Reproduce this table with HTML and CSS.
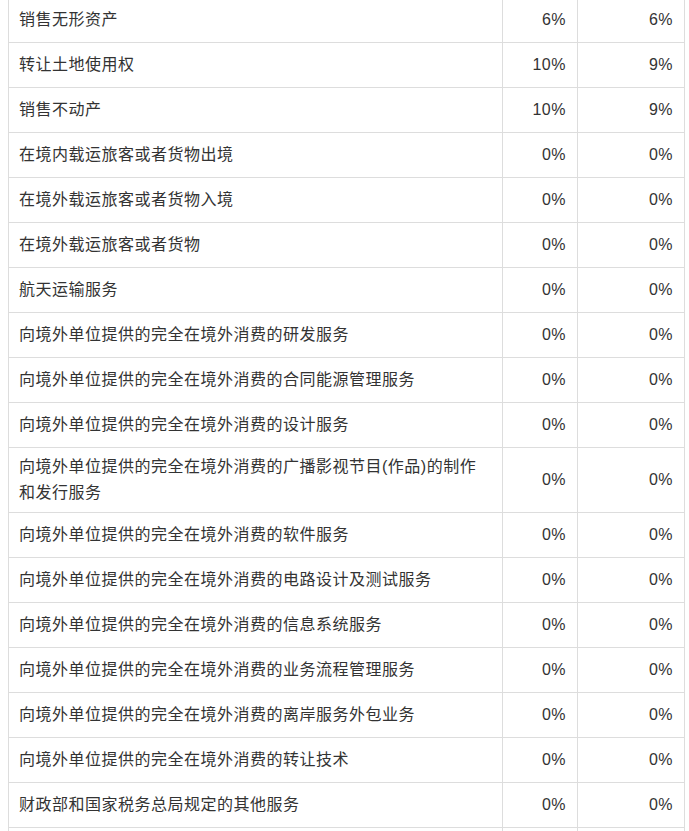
FILE: index.html
```html
<!DOCTYPE html>
<html lang="zh-CN">
<head>
<meta charset="utf-8">
<title>税率表</title>
<link rel="stylesheet" href="styles.css">
</head>
<body>
<table class="rate-table">
  <colgroup>
    <col class="col-item">
    <col class="col-rate">
    <col class="col-rate2">
  </colgroup>
  <tbody>
    <tr><td>销售无形资产</td><td class="num">6%</td><td class="num">6%</td></tr>
    <tr><td>转让土地使用权</td><td class="num">10%</td><td class="num">9%</td></tr>
    <tr><td>销售不动产</td><td class="num">10%</td><td class="num">9%</td></tr>
    <tr><td>在境内载运旅客或者货物出境</td><td class="num">0%</td><td class="num">0%</td></tr>
    <tr><td>在境外载运旅客或者货物入境</td><td class="num">0%</td><td class="num">0%</td></tr>
    <tr><td>在境外载运旅客或者货物</td><td class="num">0%</td><td class="num">0%</td></tr>
    <tr><td>航天运输服务</td><td class="num">0%</td><td class="num">0%</td></tr>
    <tr><td>向境外单位提供的完全在境外消费的研发服务</td><td class="num">0%</td><td class="num">0%</td></tr>
    <tr><td>向境外单位提供的完全在境外消费的合同能源管理服务</td><td class="num">0%</td><td class="num">0%</td></tr>
    <tr><td>向境外单位提供的完全在境外消费的设计服务</td><td class="num">0%</td><td class="num">0%</td></tr>
    <tr><td>向境外单位提供的完全在境外消费的广播影视节目(作品)的制作和发行服务</td><td class="num">0%</td><td class="num">0%</td></tr>
    <tr><td>向境外单位提供的完全在境外消费的软件服务</td><td class="num">0%</td><td class="num">0%</td></tr>
    <tr><td>向境外单位提供的完全在境外消费的电路设计及测试服务</td><td class="num">0%</td><td class="num">0%</td></tr>
    <tr><td>向境外单位提供的完全在境外消费的信息系统服务</td><td class="num">0%</td><td class="num">0%</td></tr>
    <tr><td>向境外单位提供的完全在境外消费的业务流程管理服务</td><td class="num">0%</td><td class="num">0%</td></tr>
    <tr><td>向境外单位提供的完全在境外消费的离岸服务外包业务</td><td class="num">0%</td><td class="num">0%</td></tr>
    <tr><td>向境外单位提供的完全在境外消费的转让技术</td><td class="num">0%</td><td class="num">0%</td></tr>
    <tr><td>财政部和国家税务总局规定的其他服务</td><td class="num">0%</td><td class="num">0%</td></tr>
    <tr><td>&nbsp;</td><td class="num">&nbsp;</td><td class="num">&nbsp;</td></tr>
  </tbody>
</table>
</body>
</html>
```
FILE: styles.css
```css
html, body {
  margin: 0;
  padding: 0;
  background: #ffffff;
}

body {
  overflow: hidden;
}

.rate-table {
  margin: -3px 0 0 8px;
  width: 677px;
  table-layout: fixed;
  border-collapse: separate;
  border-spacing: 0;
  border-left: 1px solid #dddddd;
  border-top: 1px solid #dddddd;
  font-family: "Liberation Sans", "Noto Sans CJK SC", sans-serif;
  font-size: 16px;
  letter-spacing: 0.5px;
  color: #333333;
}

.col-item { width: 494px; }
.col-rate { width: 75px; }
.col-rate2 { width: 107px; }

.rate-table td {
  height: 32px;
  padding: 6px 10px;
  line-height: 26px;
  vertical-align: middle;
  border-right: 1px solid #dddddd;
  border-bottom: 1px solid #dddddd;
  text-align: left;
  word-break: break-all;
}

.rate-table td.num {
  text-align: right;
  padding-right: 11px;
  padding-left: 6px;
}
```
